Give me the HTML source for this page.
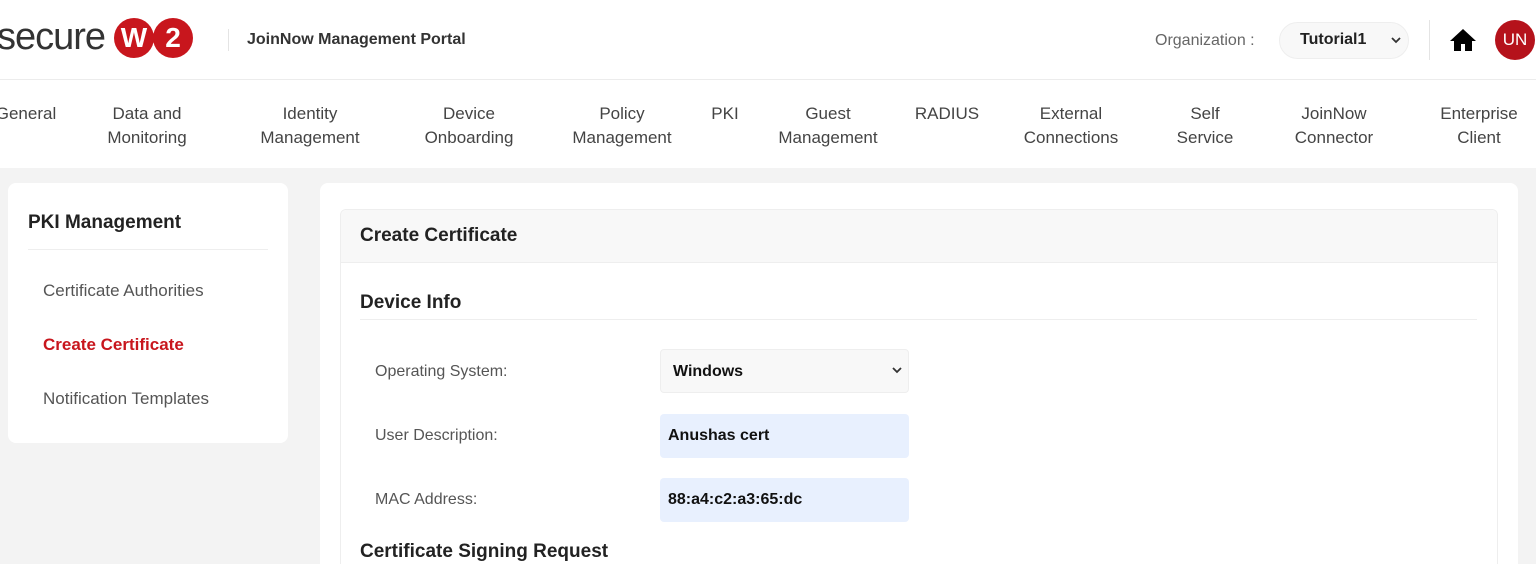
<!DOCTYPE html>
<html style="width:1536px;height:564px;overflow:hidden"><head><style>
*{margin:0;padding:0;box-sizing:border-box}
body{width:1536px;height:564px;overflow:hidden;background:#f3f3f3;font-family:"Liberation Sans",sans-serif;position:relative;color:#222}
.a{position:absolute}
.hdr{left:0;top:0;width:1536px;height:80px;background:#fff;border-bottom:1px solid #ececec}
.nav{left:0;top:80px;width:1536px;height:88px;background:#fff}
.ni{position:absolute;top:22px;transform:translateX(-50%);text-align:center;font-size:17px;line-height:24px;color:#444;white-space:nowrap}
.card{background:#fff;border-radius:8px}
.lbl{font-size:16px;color:#555}
.inp{border-radius:4px;height:44px;width:249px;font-size:16px;font-weight:bold;color:#111;padding:0 8px;line-height:44px}
</style></head><body>
<div class="a hdr">
  <div class="a" style="left:-3px;top:16px;font-size:38px;color:#333;letter-spacing:-1px">secure</div>
  <div class="a" style="left:114px;top:18px;width:40px;height:40px;border-radius:50%;background:#c8161d;color:#fff;font-size:28px;font-weight:bold;text-align:center;line-height:40px">W</div>
  <div class="a" style="left:153px;top:18px;width:40px;height:40px;border-radius:50%;background:#c8161d;color:#fff;font-size:28px;font-weight:bold;text-align:center;line-height:40px">2</div>
  <div class="a" style="left:228px;top:29px;width:1px;height:22px;background:#e4e4e4"></div>
  <div class="a" style="left:247px;top:31px;font-size:16px;font-weight:bold;color:#333">JoinNow Management Portal</div>
  <div class="a" style="left:1155px;top:32px;font-size:16px;color:#666">Organization :</div>
  <div class="a" style="left:1279px;top:22px;width:130px;height:37px;border-radius:19px;background:#f8f8f8;border:1px solid #eee"></div>
  <div class="a" style="left:1300px;top:31px;font-size:16px;font-weight:bold;color:#222">Tutorial1</div>
  <svg class="a" style="left:1389px;top:35px" width="14" height="10" viewBox="0 0 14 10"><path d="M3 3l4 4 4-4" fill="none" stroke="#333" stroke-width="1.8"/></svg>
  <div class="a" style="left:1429px;top:20px;width:1px;height:40px;background:#e4e4e4"></div>
  <svg class="a" style="left:1449px;top:28px" width="28" height="24" viewBox="0 0 28 24"><path d="M14 1L1 13h4v10h7v-7h4v7h7V13h4z" fill="#000"/></svg>
  <div class="a" style="left:1495px;top:20px;width:40px;height:40px;border-radius:50%;background:#b5121b;color:#fff;font-size:17px;text-align:center;line-height:40px">UN</div>
</div>
<div class="a nav">
  <div class="ni" style="left:26px">General</div>
  <div class="ni" style="left:147px">Data and<br>Monitoring</div>
  <div class="ni" style="left:310px">Identity<br>Management</div>
  <div class="ni" style="left:469px">Device<br>Onboarding</div>
  <div class="ni" style="left:622px">Policy<br>Management</div>
  <div class="ni" style="left:725px">PKI</div>
  <div class="ni" style="left:828px">Guest<br>Management</div>
  <div class="ni" style="left:947px">RADIUS</div>
  <div class="ni" style="left:1071px">External<br>Connections</div>
  <div class="ni" style="left:1205px">Self<br>Service</div>
  <div class="ni" style="left:1334px">JoinNow<br>Connector</div>
  <div class="ni" style="left:1479px">Enterprise<br>Client</div>
</div>
<div class="a card" style="left:8px;top:183px;width:280px;height:260px">
  <div class="a" style="left:20px;top:29px;font-size:19px;font-weight:bold;color:#222">PKI Management</div>
  <div class="a" style="left:20px;top:66px;width:240px;height:1px;background:#eee"></div>
  <div class="a lbl" style="left:35px;top:98px;font-size:17px">Certificate Authorities</div>
  <div class="a" style="left:35px;top:152px;font-size:17px;font-weight:bold;color:#c8161d">Create Certificate</div>
  <div class="a lbl" style="left:35px;top:206px;font-size:17px">Notification Templates</div>
</div>
<div class="a card" style="left:320px;top:183px;width:1198px;height:381px;border-radius:8px 8px 0 0;overflow:hidden">
  <div class="a" style="left:20px;top:26px;width:1158px;height:355px;border:1px solid #eee;border-bottom:none;border-radius:6px 6px 0 0;background:#fff">
    <div style="height:53px;background:#f8f8f8;border-bottom:1px solid #eee;border-radius:6px 6px 0 0"></div>
  </div>
  <div class="a" style="left:40px;top:42px;font-size:19px;font-weight:bold;color:#222">Create Certificate</div>
  <div class="a" style="left:40px;top:109px;font-size:19px;font-weight:bold;color:#222">Device Info</div>
  <div class="a" style="left:40px;top:136px;width:1117px;height:1px;background:#eee"></div>
  <div class="a lbl" style="left:55px;top:180px">Operating System:</div>
  <div class="a inp" style="left:340px;top:166px;background:#f8f8f8;border:1px solid #eee;padding-left:12px">Windows</div>
  <svg class="a" style="left:570px;top:182px" width="14" height="10" viewBox="0 0 14 10"><path d="M3 3l4 4 4-4" fill="none" stroke="#333" stroke-width="1.8"/></svg>
  <div class="a lbl" style="left:55px;top:244px">User Description:</div>
  <div class="a inp" style="left:340px;top:231px;background:#e8f0fe">Anushas cert</div>
  <div class="a lbl" style="left:55px;top:308px">MAC Address:</div>
  <div class="a inp" style="left:340px;top:295px;background:#e8f0fe">88:a4:c2:a3:65:dc</div>
  <div class="a" style="left:40px;top:358px;font-size:19px;font-weight:bold;color:#222;line-height:21px">Certificate Signing Request</div>
</div>
</body></html>
